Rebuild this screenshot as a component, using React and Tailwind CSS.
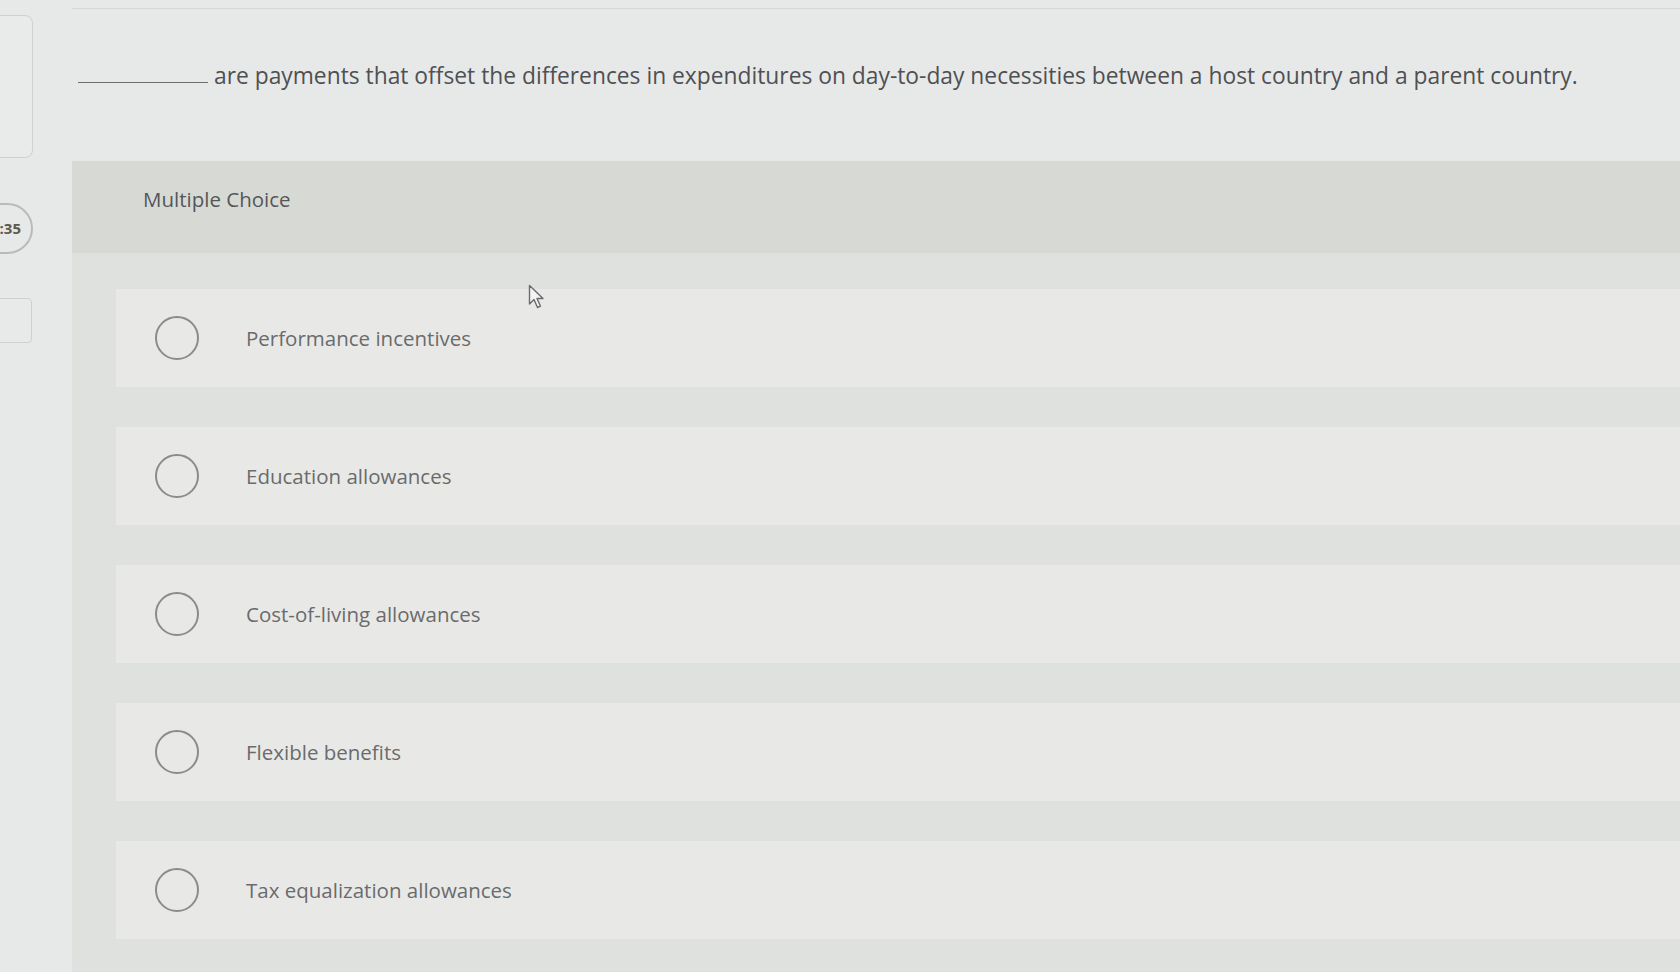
import React from "react";

const OPTIONS = [
  "Performance incentives",
  "Education allowances",
  "Cost-of-living allowances",
  "Flexible benefits",
  "Tax equalization allowances",
];

function Cursor() {
  return (
    <svg width="18" height="26" viewBox="0 0 18 26" className="absolute left-[528px] top-[284px]">
      <path d="M1.5 1.5 L1.5 20 L6 15.5 L9.5 23.5 L12.5 22.2 L9 14.5 L15 14.5 Z" fill="#f4f4f4" stroke="#6b6b6b" strokeWidth="1.4" strokeLinejoin="round" />
    </svg>
  );
}

export default function App() {
  return (
    <div className="relative w-[1680px] h-[972px] overflow-hidden bg-[#e7e9e9] flex font-['Open_Sans','Lato',sans-serif]">
      {/* left rail */}
      <div className="w-[72px] shrink-0 flex flex-col pt-[15px]">
        <div className="ml-[-20px] w-[53px] h-[143px] rounded-[8px] border border-[#cfd1d1] bg-[#e9ebeb]" />
        <div className="ml-[-26px] mt-[45px] w-[59px] h-[51px] rounded-full border-2 border-[#b9bbba] bg-[#e7e9e8] flex items-center justify-end pr-[10px]">
          <span className="text-[15px] font-bold text-[#5b5a4c]">:35</span>
        </div>
        <div className="ml-[-20px] mt-[44px] w-[52px] h-[45px] rounded-[4px] border border-[#cfd1d1] bg-[#e8eaea]" />
      </div>

      {/* main */}
      <div className="flex-1 flex flex-col border-t border-[#d6d8d8] mt-[8px]">
        <div className="flex pl-[6px] pt-[52px] h-[152px]">
          <div className="flex items-end self-start">
            <span className="inline-block w-[130px] border-b border-[#6d6d6f] mb-[8px]" />
            <p className="ml-[6px] text-[22.8px] leading-[30px] text-[#4f5052] whitespace-nowrap">
              are payments that offset the differences in expenditures on day-to-day necessities between a host country and a parent country.
            </p>
          </div>
        </div>

        <div className="flex-1 flex flex-col bg-[#dfe1de]">
          <div className="h-[92px] bg-[#d7dad4] flex items-center pl-[71px]">
            <span className="text-[20.5px] text-[#555658] -mt-[16px]">Multiple Choice</span>
          </div>

          <div className="flex flex-col gap-[40px] pt-[36px] pl-[44px]">
            {OPTIONS.map((opt) => (
              <div key={opt} className="h-[98px] bg-[#e8e9e7] flex items-center pl-[39px]">
                <span className="w-[44px] h-[44px] rounded-full border-2 border-[#8a8b8c] shrink-0" />
                <span className="ml-[47px] text-[20.5px] text-[#6a6b6c]">{opt}</span>
              </div>
            ))}
          </div>
        </div>
      </div>

      <Cursor />
    </div>
  );
}
